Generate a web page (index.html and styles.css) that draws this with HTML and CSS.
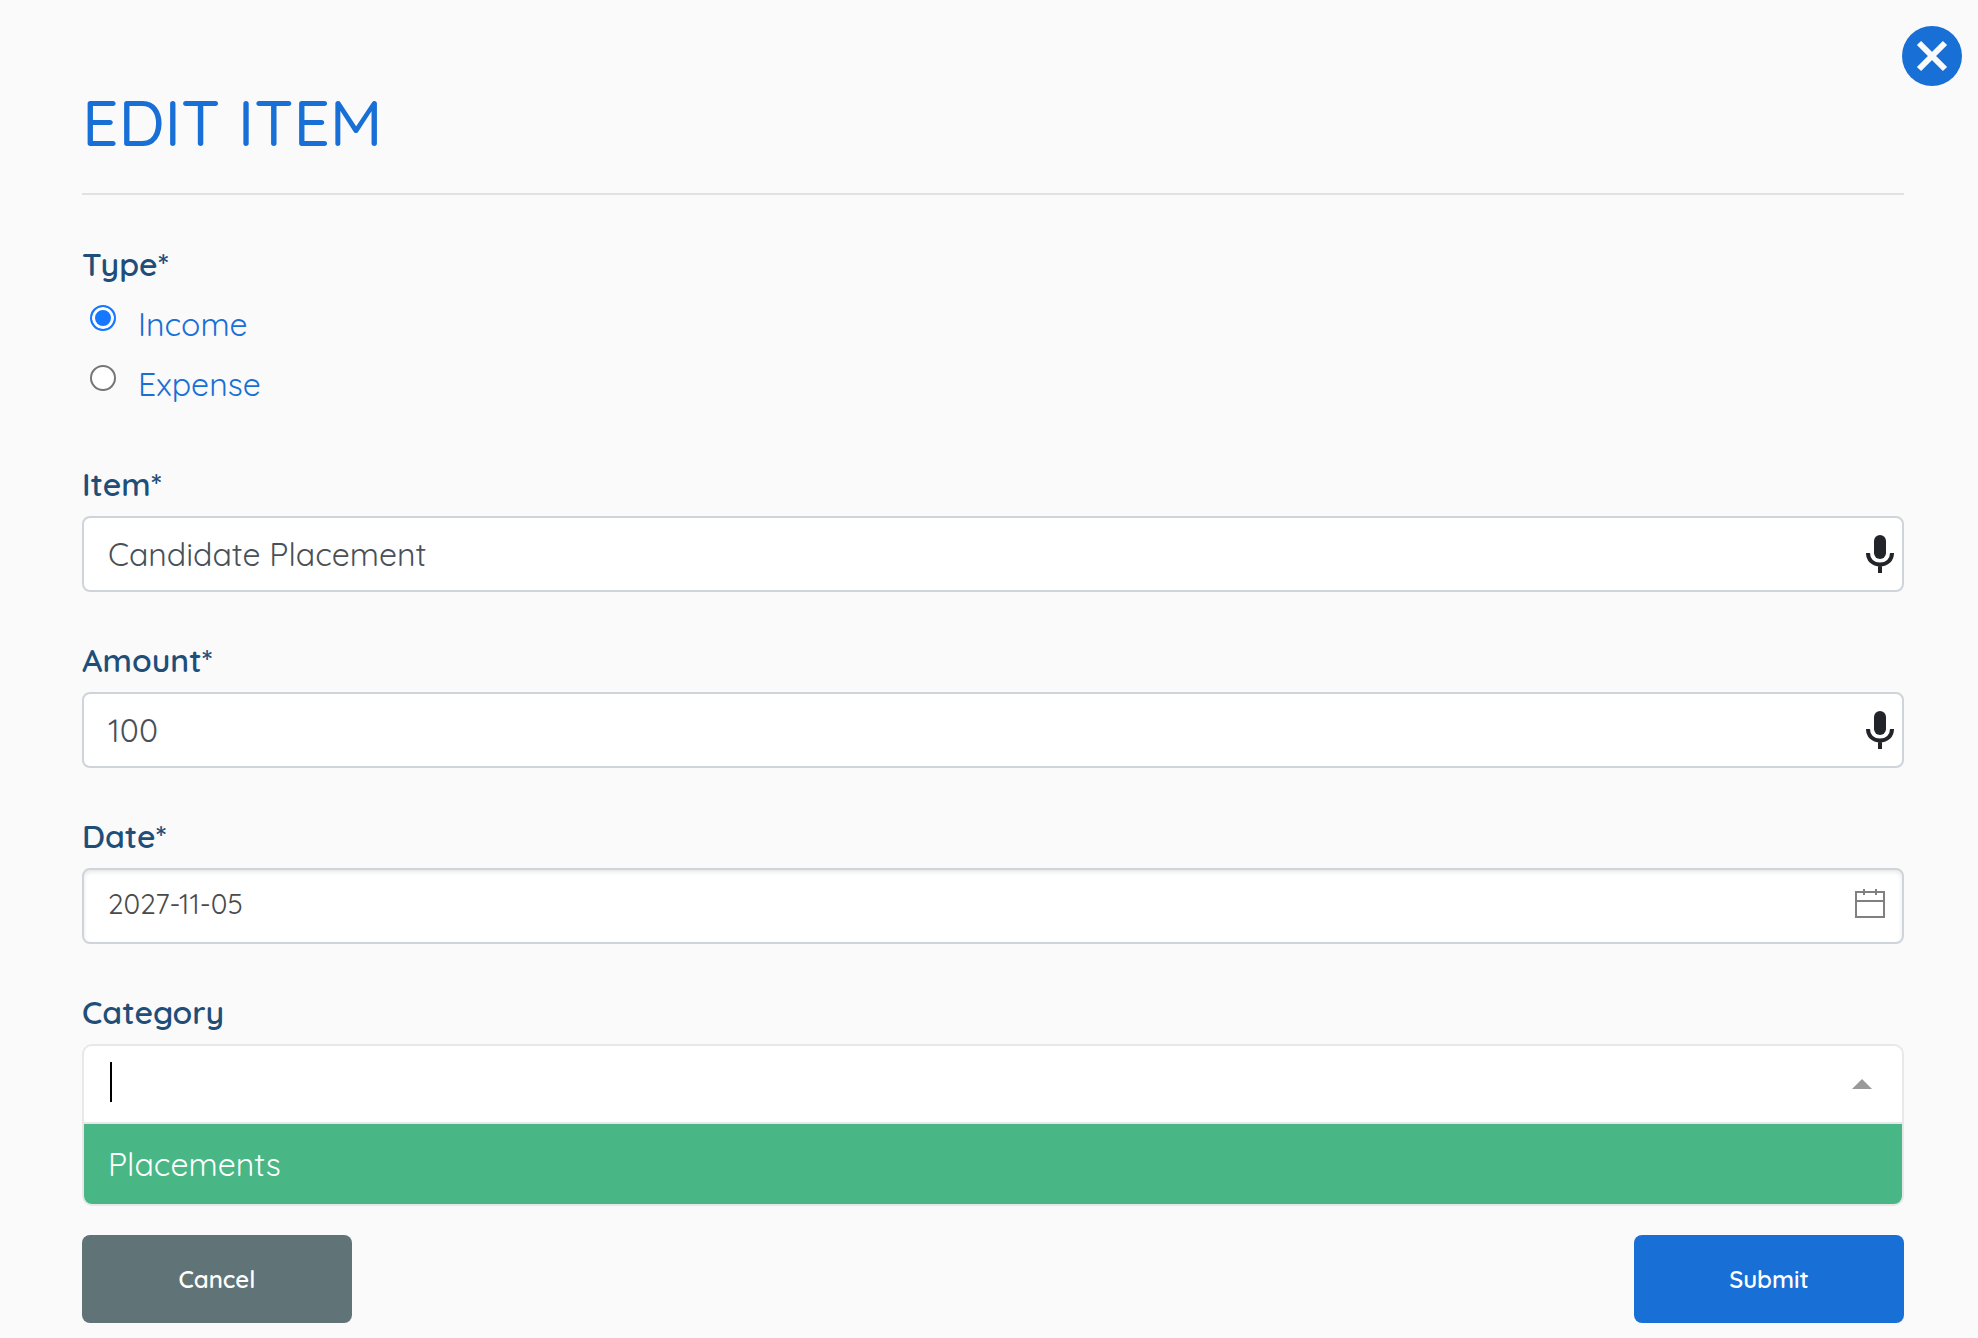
FILE: index.html
```html
<!DOCTYPE html>
<html lang="en">
<head>
    <meta charset="UTF-8">
    <meta name="viewport" content="width=device-width, initial-scale=1.0">
    <title>Edit Item</title>
    <link rel="stylesheet" href="styles.css">
</head>
<body>

    <button type="button" class="close" aria-label="Close">
        <svg width="60" height="60" viewBox="0 0 60 60">
            <circle cx="30" cy="30" r="30" fill="#186fd5"/>
            <path d="M17 17L43 43M43 17L17 43" stroke="#fafafa" stroke-width="6"/>
        </svg>
    </button>

    <form class="edit-form">
        <h1>EDIT ITEM</h1>

        <fieldset class="field">
            <legend class="label">Type*</legend>
            <div class="radio-row">
                <input type="radio" name="type" id="income" checked>
                <label for="income">Income</label>
            </div>
            <div class="radio-row">
                <input type="radio" name="type" id="expense">
                <label for="expense">Expense</label>
            </div>
        </fieldset>

        <div class="field">
            <label class="label" for="item">Item*</label>
            <div class="control">
                <input type="text" id="item" value="Candidate Placement">
                <button type="button" class="mic" aria-label="Dictate item">
                    <svg width="28" height="38" viewBox="0 0 28 38">
                        <rect x="8" y="0" width="12" height="24" rx="6" fill="#212529"/>
                        <path d="M2 18C2 25 7 29.500 14 29.500S26 25 26 18M14 30V38" fill="none" stroke="#212529" stroke-width="4"/>
                    </svg>
                </button>
            </div>
        </div>

        <div class="field">
            <label class="label" for="amount">Amount*</label>
            <div class="control">
                <input type="text" id="amount" value="100">
                <button type="button" class="mic" aria-label="Dictate amount">
                    <svg width="28" height="38" viewBox="0 0 28 38">
                        <rect x="8" y="0" width="12" height="24" rx="6" fill="#212529"/>
                        <path d="M2 18C2 25 7 29.500 14 29.500S26 25 26 18M14 30V38" fill="none" stroke="#212529" stroke-width="4"/>
                    </svg>
                </button>
            </div>
        </div>

        <div class="field">
            <label class="label" for="date">Date*</label>
            <div class="control date">
                <input type="text" id="date" value="2027-11-05">
                <button type="button" class="calendar" aria-label="Open calendar">
                    <svg width="30" height="30" viewBox="0 0 30 30">
                        <path d="M1 3H29V28H1ZM1 12H29M9 0V6M21 0V6" fill="none" stroke="#808080" stroke-width="2"/>
                    </svg>
                </button>
            </div>
        </div>

        <div class="field">
            <label class="label" for="category">Category</label>
            <div class="select">
                <div class="select-search">
                    <span class="cursor"></span>
                    <input type="text" id="category" role="combobox" aria-expanded="true" aria-controls="category-list">
                    <svg width="20" height="10" viewBox="0 0 20 10">
                        <path d="M0 10L10 0L20 10Z" fill="#999"/>
                    </svg>
                </div>
                <ul class="options" id="category-list" role="listbox">
                    <li role="option" aria-selected="true">Placements</li>
                </ul>
            </div>
        </div>

        <div class="actions">
            <button type="button" class="btn cancel">Cancel</button>
            <button type="submit" class="btn submit">Submit</button>
        </div>
    </form>

</body>
</html>
```
FILE: styles.css
```css
* {
    box-sizing: border-box;
}
body {
    margin: 0;
    position: relative;
    background-color: #fafafa;
    color: #495057;
    font-family: Quicksand, Inter, sans-serif;
    font-size: 32px;
    font-weight: 400;
    line-height: 48px;
}
input, button {
    font: inherit;
    color: inherit;
}
button {
    border: 0;
    padding: 0;
    background: none;
    cursor: pointer;
}
svg {
    display: block;
}
.close {
    position: absolute;
    top: 26px;
    right: 16px;
}
.edit-form {
    padding: 82px 74px 16px 82px;
}
h1 {
    margin: 0 0 45px;
    padding-bottom: 31px;
    border-bottom: 2px solid #e1e1e1;
    color: #186fd5;
    font-size: 64px;
    font-weight: 500;
    line-height: 80px;
}
.field {
    margin: 0 0 44px;
    padding: 0;
    border: 0;
}
.label {
    display: block;
    padding: 0;
    margin-bottom: 8px;
    color: #1f4e79;
    font-size: 32px;
    font-weight: 600;
}
.radio-row {
    display: flex;
    align-items: center;
    gap: 22px;
    height: 60px;
    padding-left: 8px;
    color: #186fd5;
}
.radio-row label {
    padding-bottom: 4px;
}
.radio-row input {
    appearance: none;
    width: 26px;
    height: 26px;
    margin: 0 0 16px;
    border: 2px solid #767676;
    border-radius: 50%;
    background-color: #fff;
}
.radio-row input:checked {
    border-color: #1677ff;
    background-color: #1677ff;
    box-shadow: inset 0 0 0 3px #fff;
}
.control {
    display: flex;
    align-items: center;
    height: 76px;
    padding: 0 8px 0 24px;
    border: 2px solid #ced4da;
    border-radius: 8px;
    background-color: #fff;
}
.control input, .select input {
    flex: 1;
    min-width: 0;
    padding: 0;
    border: 0;
    outline: 0;
    background: none;
}
.date {
    padding: 0 17px 4px 24px;
    box-shadow: inset 0 2px 4px rgba(10, 10, 10, 0.1);
    color: #4a4a4a;
}
.date input {
    font-size: 28px;
}
.select {
    border: 2px solid #e8e8e8;
    border-radius: 10px;
    background-color: #fff;
    overflow: hidden;
}
.select-search {
    display: flex;
    align-items: center;
    height: 78px;
    padding: 0 30px 0 26px;
    border-bottom: 2px solid #e8e8e8;
}
.cursor {
    width: 2px;
    height: 40px;
    margin-bottom: 4px;
    background-color: #000;
}
.options {
    margin: 0;
    padding: 0;
    list-style: none;
}
.options li {
    padding: 16px 24px;
    background-color: #48b785;
    color: #fff;
}
.actions {
    display: flex;
    justify-content: space-between;
    margin-top: -15px;
}
.btn {
    width: 270px;
    height: 88px;
    border-radius: 8px;
    color: #fff;
    font-size: 24px;
    font-weight: 600;
}
.cancel {
    background-color: #607376;
}
.submit {
    background-color: #186fd5;
}
```
